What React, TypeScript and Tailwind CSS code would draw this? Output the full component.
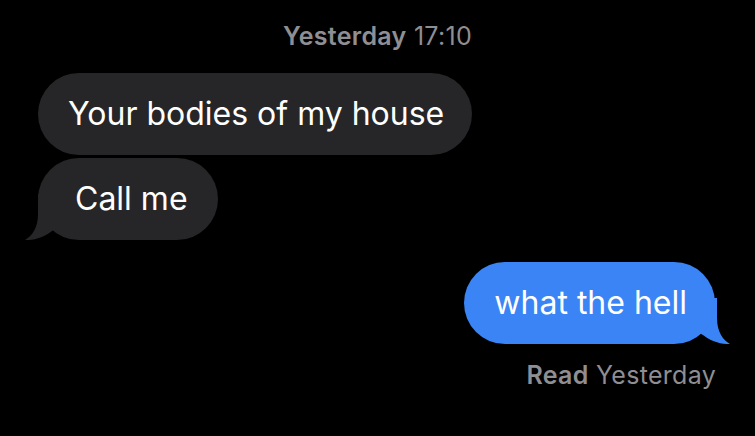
const FONT = "font-['Inter','Noto_Sans',sans-serif]";

function Tail({ color, flip }: { color: string; flip?: boolean }) {
  return (
    <svg
      viewBox="0 0 40 46"
      width={40}
      height={46}
      className={`absolute bottom-0 ${flip ? "right-[-15px] -scale-x-100" : "left-[-13px]"}`}
    >
      <path d="M13 0 L13 20 C13 34 7 42 0 46 C9 46.5 20 43 27 37 L40 30 L40 0 Z" fill={color} />
    </svg>
  );
}

function Bubble({
  text,
  tail,
  blue,
  pad = "pl-[30px] pr-[28px]",
}: {
  text: string;
  tail?: boolean;
  blue?: boolean;
  pad?: string;
}) {
  const color = blue ? "#3a84f5" : "#262628";
  return (
    <div className="relative">
      {tail && <Tail color={color} flip={blue} />}
      <div
        className={`relative h-[82px] ${pad} rounded-[41px] flex items-center text-[32px] text-white ${
          blue ? "bg-[#3a84f5]" : "bg-[#262628]"
        }`}
      >
        {text}
      </div>
    </div>
  );
}

export default function App() {
  return (
    <div className={`w-[755px] h-[436px] bg-black overflow-hidden ${FONT}`}>
      <div className="pt-[21px] text-center text-[25px] leading-[30px] tracking-[0.3px] text-[#8e8e93]">
        <span className="font-semibold">Yesterday</span> 17:10
      </div>

      <div className="mt-[22px] pl-[38px] flex flex-col items-start gap-[3px]">
        <Bubble text="Your bodies of my house" />
        <Bubble text="Call me" tail pad="pl-[37px] pr-[30px]" />
      </div>

      <div className="mt-[22px] pr-[40px] flex flex-col items-end">
        <Bubble text="what the hell" tail blue />
        <div className="mt-[16px] mr-[-1px] text-[25px] leading-[30px] tracking-[0.3px] text-[#8e8e93]">
          <span className="font-semibold">Read</span> Yesterday
        </div>
      </div>
    </div>
  );
}
